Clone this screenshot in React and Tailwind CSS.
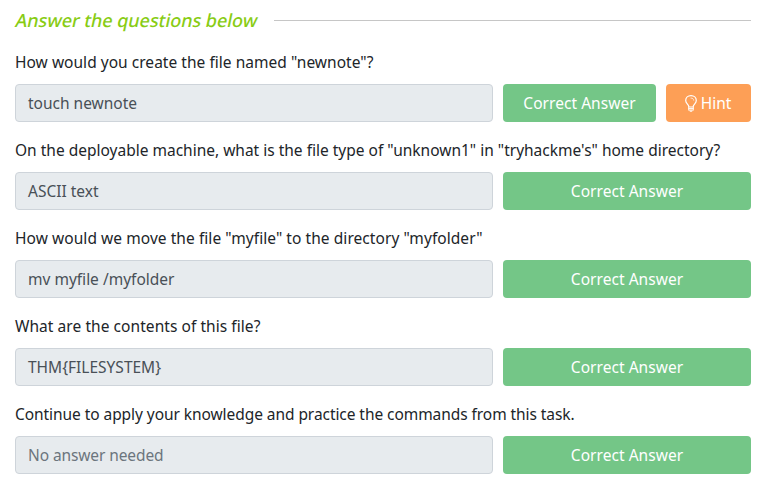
import clsx from 'clsx';

const questions = [
  {
    text: 'How would you create the file named "newnote"?',
    textClass: 'tracking-[0.03px]',
    answer: 'touch newnote',
    hint: true,
  },
  {
    text: 'On the deployable machine, what is the file type of "unknown1" in "tryhackme\'s" home directory?',
    textClass: 'tracking-normal',
    answer: 'ASCII text',
  },
  {
    text: 'How would we move the file "myfile" to the directory "myfolder"',
    textClass: 'tracking-[0.06px]',
    answer: 'mv myfile /myfolder',
  },
  {
    text: 'What are the contents of this file?',
    textClass: 'tracking-[0.06px]',
    answer: 'THM{FILESYSTEM}',
  },
  {
    text: 'Continue to apply your knowledge and practice the commands from this task.',
    textClass: 'tracking-[-0.065px]',
    placeholder: 'No answer needed',
  },
];

const LightbulbIcon = () => (
  <svg width="12" height="17" viewBox="0 0 12 17" fill="none" stroke="currentColor" strokeLinecap="round" strokeLinejoin="round">
    <path d="M3.8 11.6C3.8 9.4 0.7 8.6 0.7 5.6C0.7 2.7 3 0.7 6 0.7S11.3 2.7 11.3 5.6C11.3 8.6 8.2 9.4 8.2 11.6" strokeWidth="1.2" />
    <path d="M6 3.1C7.5 3.1 8.7 3.9 8.7 5.2" strokeWidth="0.7" />
    <path d="M3.8 12H8.2M3.8 13.6H8.2M4.1 15.1H7.9M5.2 16.2H6.8" strokeWidth="1" />
    <path d="M3.6 12V15M8.4 12V15" strokeWidth="0.8" />
  </svg>
);

const Question = ({ text, textClass, answer, placeholder, hint }) => (
  <div className="mb-4">
    <p className={clsx('mb-2.5 whitespace-nowrap text-[15.5px] leading-6 text-[#212529]', textClass)}>{text}</p>
    <div className="flex gap-2.5">
      <div
        className={clsx(
          'flex h-[38px] w-[478px] items-center rounded border border-[#ced4da] bg-[#e7ebee] px-3 pt-px text-[15.5px]',
          answer ? 'tracking-normal text-[#495057]' : 'tracking-[-0.1px] text-[#6c757d]'
        )}
      >
        {answer || placeholder}
      </div>
      <button className="h-[38px] flex-1 rounded bg-[#74c687] pt-px text-[15.5px] tracking-[0.05px] text-white">Correct Answer</button>
      {hint && (
        <button className="flex h-[38px] w-[85px] items-center justify-center gap-1 rounded bg-[#fd9f56] pr-px text-[15.5px] text-white">
          <LightbulbIcon />
          <span className="pt-px tracking-[-0.05px]">Hint</span>
        </button>
      )}
    </div>
  </div>
);

const App = () => (
  <main className="h-[483px] overflow-hidden bg-white px-[15px] pt-2 font-['Noto_Sans',sans-serif]">
    <div className="mb-[18px] flex h-6 items-center justify-between">
      <h2 className="-skew-x-12 whitespace-nowrap pl-px text-[18px] font-medium leading-6 tracking-[-0.04px] text-[#88cc14]">Answer the questions below</h2>
      <div className="h-px w-[477px] bg-[#c6c6c6]" />
    </div>
    {questions.map((question) => (
      <Question key={question.text} {...question} />
    ))}
  </main>
);

export default App;
